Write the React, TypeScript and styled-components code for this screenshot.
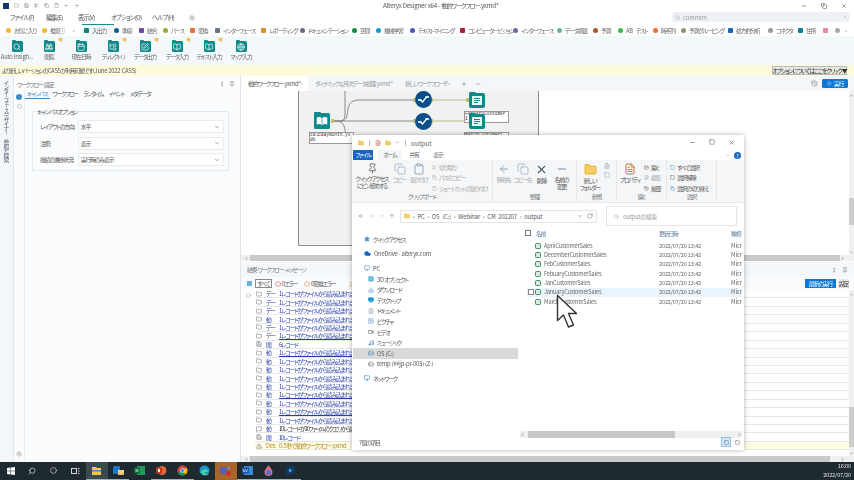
import type { ReactNode } from "react";
import styled, { createGlobalStyle } from "styled-components";
import {
  ArrowLeft,
  ArrowRight,
  ArrowUp,
  Binoculars,
  BookOpen,
  Calendar,
  ChevronDown,
  ChevronLeft,
  ChevronRight,
  ChevronUp,
  Circle,
  Clipboard,
  Cloud,
  Copy,
  Download,
  FileText,
  FolderTree,
  Folder,
  FolderOpen,
  Globe,
  HardDrive,
  History,
  Image,
  Minus,
  MoreVertical,
  Music,
  Pin,
  Play,
  Plus,
  RotateCw,
  Save,
  Scissors,
  Search,
  Settings,
  Square,
  SquarePen,
  Star,
  TriangleAlert,
  Video,
  Monitor,
  MessageSquare,
  X,
} from "lucide-react";

const GlobalStyle = createGlobalStyle`
  html, body {
    margin: 0;
    padding: 0;
    background: #fff;
  }
  body {
    font-family: "Noto Sans CJK JP", "Noto Sans", sans-serif;
    font-size: 5.8px;
    letter-spacing: -1.1px;
    font-feature-settings: "palt";
    color: #444;
  }
  * { box-sizing: border-box; }
`;

const Screen = styled.div`
  position: relative;
  width: 854px;
  height: 480px;
  overflow: hidden;
  display: flex;
  flex-direction: column;
  filter: blur(0.35px);
`;

// latin runs inside the squeezed japanese text
const Lat = styled.span`
  letter-spacing: -0.2px;
`;

const TitleBar = styled.div`
  height: 11px;
  display: flex;
  align-items: center;
  padding: 0 7px 0 3px;
  flex-shrink: 0;
  color: #666;
  position: relative;
`;
const AppLogo = styled.div`
  width: 6px;
  height: 6px;
  background: #14376e;
  margin-right: 5px;
`;
const QuickIcons = styled.div`
  display: flex;
  gap: 5px;
  color: #777;
`;
const AppTitle = styled.div`
  margin-left: 304px;
  font-size: 6.2px;
  color: #555;
`;
const WinControls = styled.div`
  margin-left: auto;
  display: flex;
  gap: 14px;
  color: #444;
`;

const MenuBar = styled.div`
  height: 13px;
  display: flex;
  align-items: center;
  padding-left: 10px;
  flex-shrink: 0;
  position: relative;
`;
const MenuItem = styled.span<{ $w: number }>`
  width: ${(p) => p.$w}px;
  color: #555;
  font-size: 6.3px;
  letter-spacing: -0.8px;
`;
const SearchBox = styled.div`
  position: absolute;
  left: 672px;
  top: 1px;
  width: 178px;
  height: 10px;
  background: #eef2f6;
  border-radius: 2px;
  display: flex;
  align-items: center;
  padding: 0 3px;
  gap: 3px;
  color: #999;
  letter-spacing: 0;
`;
const SearchClear = styled(X)`
  margin-left: auto;
`;

const CategoryBar = styled.div`
  height: 12px;
  display: flex;
  align-items: center;
  padding-left: 6px;
  flex-shrink: 0;
  white-space: nowrap;
  overflow: hidden;
`;
const Category = styled.div<{ $active?: boolean; $w: number }>`
  width: ${(p) => p.$w}px;
  height: 12px;
  flex-shrink: 0;
  display: flex;
  align-items: center;
  gap: 3px;
  color: #666;
  padding-left: ${(p) => (p.$active ? "2px" : "0")};
  background: ${(p) => (p.$active ? "#f3f8fb" : "transparent")};
  border-top: 1px solid ${(p) => (p.$active ? "#1a8d8d" : "transparent")};
`;
const Dot = styled.i<{ $color: string; $square?: boolean }>`
  display: block;
  width: 5px;
  height: 5px;
  flex-shrink: 0;
  border-radius: ${(p) => (p.$square ? "1px" : "50%")};
  background: ${(p) => p.$color};
`;

const Ribbon = styled.div`
  height: 29px;
  background: #f3f8fb;
  display: flex;
  align-items: flex-start;
  flex-shrink: 0;
  padding-left: 1px;
`;
const Tool = styled.div`
  position: relative;
  width: 32px;
  display: flex;
  flex-direction: column;
  align-items: center;
  padding-top: 5px;
  color: #666;
  line-height: 9px;
  white-space: nowrap;
`;
const ToolIcon = styled.div<{ $size?: number }>`
  position: relative;
  width: ${(p) => p.$size ?? 11}px;
  height: ${(p) => p.$size ?? 11}px;
  border-radius: 1.5px;
  background: #0f8a8a;
  color: #fff;
  display: flex;
  align-items: center;
  justify-content: center;
  &::before {
    content: "";
    position: absolute;
    top: -1px;
    left: 0;
    width: 45%;
    height: 2px;
    border-radius: 1px 1px 0 0;
    background: #0f8a8a;
  }
`;
const ToolStar = styled(Star)`
  position: absolute;
  top: 1px;
  right: 2px;
  color: #f3bd45;
  fill: #f3bd45;
`;

const Notice = styled.div`
  height: 11px;
  background: #fdfbdc;
  display: flex;
  align-items: center;
  justify-content: space-between;
  padding: 0 7px 0 2px;
  flex-shrink: 0;
  color: #555;
  white-space: nowrap;
`;
const NoticeText = styled.span`
  display: block;
`;
const NoticeButton = styled.div`
  height: 9px;
  width: 75px;
  background: #e6e6e2;
  border: 0.5px solid #bbb;
  color: #333;
  display: flex;
  align-items: center;
  justify-content: center;
`;

const Main = styled.div`
  flex: 1;
  min-height: 0;
  display: flex;
`;
const LeftRail = styled.div`
  width: 14px;
  background: #f3f7fa;
  border-right: 1px solid #e2e8ec;
  display: flex;
  flex-direction: column;
  align-items: center;
  gap: 5px;
  padding-top: 4px;
`;
const RailLabel = styled.div`
  writing-mode: vertical-rl;
  color: #667;
  white-space: nowrap;
  font-feature-settings: "vpal";
  letter-spacing: -1.2px;
`;
const SettingsPanel = styled.div`
  width: 227px;
  background: #fafcfd;
  border-right: 1px solid #dfe4e8;
  display: flex;
  flex-direction: column;
  position: relative;
`;
const PanelHeader = styled.div`
  height: 14px;
  padding: 2px 5px 0 3px;
  display: flex;
  align-items: center;
  gap: 4px;
  color: #777;
  flex-shrink: 0;
`;
const HeaderTitle = styled.span`
  margin-right: auto;
`;
const SettingsBody = styled.div`
  flex: 1;
  display: flex;
`;
const SideIcons = styled.div`
  width: 11px;
  border-right: 1px solid #e8edf0;
  display: flex;
  flex-direction: column;
  align-items: center;
  gap: 4px;
  padding-top: 4px;
  color: #888;
  position: relative;
`;
const SideDot = styled.div`
  width: 6px;
  height: 6px;
  border-radius: 50%;
  background: #3d8fc9;
`;
const SideFoot = styled.div`
  position: absolute;
  bottom: 3px;
  color: #999;
`;
const SettingsContent = styled.div`
  flex: 1;
  display: flex;
  flex-direction: column;
`;
const SubTabs = styled.div`
  height: 9px;
  display: flex;
  gap: 1px;
  margin-bottom: 12px;
  flex-shrink: 0;
`;
const SubTab = styled.span<{ $active?: boolean }>`
  color: ${(p) => (p.$active ? "#3a85c0" : "#555")};
  border-bottom: 1px solid ${(p) => (p.$active ? "#3a85c0" : "transparent")};
  padding: 0 2px;
  height: 9px;
  line-height: 8px;
`;
const GroupBox = styled.div`
  position: relative;
  margin-left: 7px;
  width: 197px;
  height: 60px;
  border: 1px solid #e4e9ec;
  padding: 8px 4px 0 7px;
  display: flex;
  flex-direction: column;
  gap: 3.5px;
`;
const GroupLegend = styled.span`
  position: absolute;
  top: -3px;
  left: 3px;
  background: #fafcfd;
  padding: 0 1px;
  color: #555;
  line-height: 6px;
`;
const FieldRow = styled.div`
  display: flex;
  align-items: center;
`;
const FieldLabel = styled.span`
  width: 38px;
  color: #555;
  white-space: nowrap;
`;
const SelectBox = styled.div`
  width: 147px;
  height: 13px;
  background: #fff;
  border: 1px solid #e8ebee;
  border-radius: 1px;
  display: flex;
  align-items: center;
  justify-content: space-between;
  padding: 0 3px 0 2px;
  color: #555;
`;

const Workspace = styled.div`
  flex: 1;
  min-width: 0;
  display: flex;
  flex-direction: column;
`;
const DocTabs = styled.div`
  height: 15px;
  background: #f3f7fa;
  display: flex;
  align-items: stretch;
  flex-shrink: 0;
  position: relative;
  color: #888;
`;
const DocTab = styled.div<{ $active?: boolean; $w: number }>`
  width: ${(p) => p.$w}px;
  padding: 0 5px 0 7px;
  display: flex;
  align-items: center;
  justify-content: space-between;
  background: ${(p) => (p.$active ? "#fff" : "transparent")};
  color: ${(p) => (p.$active ? "#555" : "#999")};
  white-space: nowrap;
`;
const TabTools = styled.div`
  display: flex;
  align-items: center;
  gap: 8px;
  margin-left: 5px;
  color: #777;
`;
const RunArea = styled.div`
  margin-left: auto;
  display: flex;
  align-items: center;
  gap: 4px;
  padding-right: 6px;
  color: #777;
`;
const RunButton = styled.div`
  width: 26px;
  height: 9px;
  border-radius: 1.5px;
  background: #0a78d7;
  color: #fff;
  display: flex;
  align-items: center;
  justify-content: center;
  gap: 2px;
`;
const CanvasRow = styled.div`
  height: 164px;
  display: flex;
  flex-shrink: 0;
`;
const Canvas = styled.div`
  position: relative;
  flex: 1;
  background: #fff;
  overflow: hidden;
`;
const CanvasFrame = styled.div`
  position: absolute;
  left: 57px;
  top: -2px;
  width: 241px;
  height: 157px;
  background: #f1f1f1;
  border: 1px solid #8b8b8b;
`;
const Wires = styled.svg`
  position: absolute;
  inset: 0;
`;
const Node = styled.div<{ $x: number; $y: number }>`
  position: absolute;
  left: ${(p) => p.$x}px;
  top: ${(p) => p.$y}px;
`;
const Annotation = styled.div<{ $x: number; $y: number }>`
  position: absolute;
  left: ${(p) => p.$x}px;
  top: ${(p) => p.$y}px;
  width: 45px;
  height: 12px;
  background: #fff;
  border: 1px solid #999;
  font-family: "Liberation Mono", monospace;
  font-size: 4.5px;
  letter-spacing: 0;
  line-height: 4.6px;
  color: #333;
  overflow: hidden;
  word-break: break-all;
`;
const VScroll = styled.div`
  width: 5px;
  background: #f0f0f0;
  position: relative;
  color: #555;
  flex-shrink: 0;
`;
const VThumb = styled.div<{ $top: number; $h: number }>`
  position: absolute;
  left: 0;
  right: 0;
  top: ${(p) => p.$top}px;
  height: ${(p) => p.$h}px;
  background: #cdcdcd;
`;
const VArrowEnd = styled(ChevronDown)`
  position: absolute;
  bottom: 0;
  left: 0;
`;
const HScroll = styled.div`
  height: 6px;
  display: flex;
  align-items: center;
  background: #f0f0f0;
  color: #444;
  flex-shrink: 0;
  padding: 0 9px 0 3px;
  justify-content: space-between;
  position: relative;
`;
const HThumb = styled.div<{ $l: number; $r: number }>`
  position: absolute;
  top: 0;
  bottom: 0;
  left: ${(p) => p.$l}px;
  right: ${(p) => p.$r}px;
  background: #c9c9c9;
`;
const ScrollLeft = styled(ChevronLeft)`
  position: relative;
`;
const ScrollRight = styled(ChevronRight)`
  position: relative;
`;

const Results = styled.div`
  flex: 1;
  min-height: 0;
  display: flex;
  flex-direction: column;
  margin-top: 1px;
  background: #fff;
`;
const ResultsHead = styled.div`
  height: 15px;
  background: #f5f8fa;
  display: flex;
  align-items: center;
  gap: 5px;
  padding: 0 6px;
  color: #777;
  flex-shrink: 0;
`;
const ResultsBar = styled.div`
  height: 13px;
  background: #f9fbfc;
  display: flex;
  align-items: center;
  padding: 0 5px 0 6px;
  flex-shrink: 0;
  gap: 3px;
  color: #555;
`;
const BarDot = styled.div`
  width: 5px;
  height: 5px;
  background: #6cb0dc;
`;
const AllButton = styled.div`
  width: 17px;
  height: 9px;
  border: 1px solid #888;
  background: #fff;
  text-align: center;
  line-height: 7px;
`;
const BarItem = styled.span<{ $w: number }>`
  width: ${(p) => p.$w}px;
  display: flex;
  align-items: center;
  gap: 1px;
  white-space: nowrap;
`;
const LatestButton = styled.div`
  margin-left: auto;
  width: 31px;
  height: 9px;
  background: #0a78d7;
  color: #fff;
  text-align: center;
  line-height: 9px;
`;
const SetupButton = styled.div`
  width: 11px;
  height: 9px;
  background: #e9e9e9;
  text-align: center;
  line-height: 9px;
  color: #333;
  margin-left: -1px;
`;
const TableWrap = styled.div`
  flex: 1;
  min-height: 0;
  display: flex;
`;
const Table = styled.div`
  flex: 1;
  padding-left: 5px;
  display: flex;
`;
const TableSide = styled.div`
  width: 9px;
  color: #888;
  padding-top: 1px;
`;
const TableRows = styled.div`
  flex: 1;
`;
const LogRow = styled.div<{ $warn?: boolean }>`
  height: 8.45px;
  display: flex;
  align-items: center;
  border-bottom: 1px solid #e7e7e7;
  background: ${(p) => (p.$warn ? "#fffce6" : "#fff")};
  color: ${(p) => (p.$warn ? "#b08a1e" : "#333")};
  white-space: nowrap;
  overflow: hidden;
`;
const LogIcon = styled.div`
  width: 8px;
  color: #666;
  display: flex;
  justify-content: center;
  flex-shrink: 0;
`;
const LogTool = styled.span<{ $plain?: boolean }>`
  width: 16px;
  padding-left: 3px;
  color: ${(p) => (p.$plain ? "inherit" : "#2a3fa8")};
  flex-shrink: 0;
`;
const LogText = styled.span<{ $link?: boolean }>`
  color: ${(p) => (p.$link ? "#2a3fa8" : "inherit")};
  text-decoration: ${(p) => (p.$link ? "underline" : "none")};
`;

const Taskbar = styled.div`
  height: 18px;
  background: #1e2a30;
  display: flex;
  align-items: center;
  flex-shrink: 0;
  color: #e8e8e8;
  position: relative;
`;
const TaskSlot = styled.div<{ $bg?: string; $open?: boolean }>`
  width: 21.5px;
  height: 18px;
  display: flex;
  align-items: center;
  justify-content: center;
  background: ${(p) => p.$bg ?? "transparent"};
  border-bottom: 1px solid ${(p) => (p.$open ? "#9fb0b8" : "transparent")};
`;
const MirroredSearch = styled(Search)`
  transform: scaleX(-1);
`;
const Clock = styled.div`
  margin-left: auto;
  padding-right: 3px;
  text-align: right;
  font-size: 5.5px;
  letter-spacing: -0.1px;
  line-height: 9px;
  color: #dfe5e8;
`;

/* explorer window floats over the designer */
const ExplorerWindow = styled.div`
  position: absolute;
  left: 352px;
  top: 135px;
  width: 392px;
  height: 315px;
  background: #fff;
  box-shadow: 0 0 5px rgba(0, 0, 0, 0.3);
  display: flex;
  flex-direction: column;
`;
const ExTitle = styled.div`
  height: 15px;
  display: flex;
  align-items: center;
  padding: 0 9px 0 6px;
  gap: 4px;
  color: #666;
  flex-shrink: 0;
  font-size: 6.5px;
  letter-spacing: 0;
`;
const TitleDivider = styled.i`
  width: 1px;
  height: 6px;
  background: #bbb;
  margin: 0 1px;
`;
const ExControls = styled.div`
  margin-left: auto;
  display: flex;
  gap: 13px;
  color: #555;
`;
const ExTabs = styled.div`
  height: 10px;
  display: flex;
  align-items: stretch;
  flex-shrink: 0;
  color: #666;
  padding-left: 1px;
  position: relative;
`;
const ExFileTab = styled.div`
  width: 20px;
  margin-right: 5px;
  background: #1566c0;
  color: #fff;
  text-align: center;
  line-height: 10px;
`;
const ExTab = styled.div<{ $active?: boolean }>`
  width: 24px;
  text-align: center;
  line-height: 10px;
  background: ${(p) => (p.$active ? "#f5f6f7" : "transparent")};
`;
const ExHelp = styled.div`
  margin-left: auto;
  display: flex;
  align-items: center;
  gap: 4px;
  padding-right: 3px;
  color: #888;
`;
const HelpDot = styled.div`
  width: 7px;
  height: 7px;
  border-radius: 50%;
  background: #1568c4;
  color: #fff;
  text-align: center;
  line-height: 7px;
  font-size: 5px;
  letter-spacing: 0;
`;
const ExRibbon = styled.div`
  height: 43px;
  background: #f5f6f7;
  display: flex;
  border-bottom: 1px solid #e8eaec;
  flex-shrink: 0;
`;
const RibbonGroup = styled.div<{ $w: number }>`
  width: ${(p) => p.$w}px;
  border-right: 1px solid #e6e8ea;
  display: flex;
  flex-direction: column;
  flex-shrink: 0;
`;
const GroupItems = styled.div`
  flex: 1;
  min-height: 0;
  display: flex;
  gap: 4px;
  padding: 3px 3px 0;
  color: #8fa0b0;
`;
const GroupName = styled.div`
  height: 9px;
  text-align: center;
  color: #777;
  line-height: 8px;
  white-space: nowrap;
`;
const BigAction = styled.div<{ $w?: number; $muted?: boolean }>`
  width: ${(p) => p.$w ?? 20}px;
  display: flex;
  flex-direction: column;
  align-items: center;
  gap: 1px;
  text-align: center;
  line-height: 7px;
  white-space: nowrap;
  color: ${(p) => (p.$muted ? "#aaa" : "#555")};
`;
const SmallActions = styled.div`
  display: flex;
  flex-direction: column;
  gap: 2.5px;
`;
const SmallAction = styled.div<{ $muted?: boolean }>`
  display: flex;
  align-items: center;
  gap: 2px;
  height: 8px;
  color: ${(p) => (p.$muted ? "#aaa" : "#555")};
  white-space: nowrap;
`;
const ExAddress = styled.div`
  height: 26px;
  display: flex;
  align-items: center;
  padding: 0 7px 0 6px;
  gap: 5px;
  color: #777;
  flex-shrink: 0;
`;
const AddressBox = styled.div`
  width: 197px;
  height: 13px;
  border: 1px solid #e4e4e4;
  display: flex;
  align-items: center;
  gap: 3px;
  padding: 0 3px;
  color: #555;
  letter-spacing: -0.1px;
  word-spacing: 1.6px;
  white-space: nowrap;
`;
const AddressEnd = styled.div`
  margin-left: auto;
  display: flex;
  gap: 4px;
  color: #666;
`;
const ExSearch = styled.div`
  margin-left: 4px;
  flex: 1;
  height: 20px;
  border: 1px solid #e6e6e6;
  display: flex;
  align-items: center;
  gap: 4px;
  padding-left: 7px;
  color: #999;
  letter-spacing: -0.2px;
`;
const ExBody = styled.div`
  flex: 1;
  min-height: 0;
  display: flex;
  position: relative;
`;
const NavTree = styled.div`
  width: 166px;
  padding: 5px 0 0 1px;
  display: flex;
  flex-direction: column;
  flex-shrink: 0;
`;
const NavItem = styled.div<{ $indent?: boolean; $selected?: boolean; $gap?: number }>`
  height: 10.6px;
  margin-top: ${(p) => p.$gap ?? 0}px;
  padding-left: ${(p) => (p.$indent ? "15px" : "11px")};
  display: flex;
  align-items: center;
  gap: 3px;
  color: #555;
  background: ${(p) => (p.$selected ? "#d9d9d9" : "transparent")};
  white-space: nowrap;
`;
const NavIcon = styled.div<{ $color: string }>`
  color: ${(p) => p.$color};
  display: flex;
`;
const FilePane = styled.div`
  flex: 1;
  min-width: 0;
  position: relative;
  display: flex;
  flex-direction: column;
`;
const FileHead = styled.div`
  height: 12px;
  padding: 0 0 4px 7px;
  display: flex;
  align-items: center;
  color: #5d7da0;
  flex-shrink: 0;
`;
const HeadCheck = styled.div`
  width: 6px;
  height: 6px;
  border: 1px solid #777;
  margin-right: 5px;
`;
const FileCol = styled.div<{ $w: number }>`
  width: ${(p) => p.$w}px;
  white-space: nowrap;
  flex-shrink: 0;
`;
const FileRows = styled.div`
  flex: 1;
`;
const FileRow = styled.div<{ $hover?: boolean }>`
  height: 9.33px;
  margin: 0 2px 0 9px;
  display: flex;
  align-items: center;
  padding-left: 1px;
  background: ${(p) => (p.$hover ? "#e9f4fc" : "transparent")};
  color: #666;
  letter-spacing: -0.15px;
  font-size: 5.6px;
  white-space: nowrap;
`;
const RowCheck = styled.div<{ $on?: boolean }>`
  width: 6px;
  height: 6px;
  border: ${(p) => (p.$on ? "1px solid #888" : "none")};
  background: ${(p) => (p.$on ? "#fff" : "transparent")};
  margin-right: 1px;
  flex-shrink: 0;
`;
const ExcelBadge = styled.div`
  width: 6px;
  height: 6px;
  border-radius: 1.5px;
  border: 1.5px solid #3c8a63;
  background: #d9ebe1;
  margin-right: 3px;
  flex-shrink: 0;
`;
const ExScroll = styled.div`
  height: 7px;
  margin: 0 2px 3px;
  background: #f0f0f0;
  display: flex;
  align-items: center;
  justify-content: space-between;
  color: #444;
  position: relative;
  flex-shrink: 0;
`;
const ExThumb = styled.div`
  position: absolute;
  left: 8px;
  top: 0;
  bottom: 0;
  width: 147px;
  background: #c6c6c6;
`;
const StatusGap = styled.div`
  height: 9px;
  flex-shrink: 0;
`;
const ExStatus = styled.div`
  height: 12px;
  display: flex;
  align-items: center;
  padding: 0 2px 0 7px;
  color: #666;
  position: absolute;
  left: 0;
  right: 0;
  bottom: 2px;
`;
const ViewButtons = styled.div`
  margin-left: auto;
  display: flex;
  gap: 1px;
`;
const ViewButton = styled.div<{ $on?: boolean }>`
  width: 10px;
  height: 10px;
  border: 1px solid ${(p) => (p.$on ? "#8cc4e8" : "transparent")};
  background: ${(p) => (p.$on ? "#d4e9f7" : "transparent")};
  display: flex;
  align-items: center;
  justify-content: center;
  color: #556;
`;
const Cursor = styled.svg`
  position: absolute;
  left: 556px;
  top: 294px;
`;

const categories: { label: ReactNode; key: string; color?: string; square?: boolean; w: number }[] = [
  { key: "fav", label: "お気に入り", color: "#f2b830", w: 36 },
  { key: "rec", label: "推奨 ⓘ", color: "#f2b830", w: 31 },
  { key: "prev", label: "‹", w: 9 },
  { key: "io", label: "入出力", color: "#13807f", square: true, w: 32 },
  { key: "prep", label: "準備", color: "#0f5a94", w: 25 },
  { key: "join", label: "結合", color: "#6a4c9c", square: true, w: 24 },
  { key: "parse", label: "パース", color: "#9aa63a", w: 27 },
  { key: "transform", label: "変換", color: "#e2713a", square: true, w: 25 },
  { key: "iface", label: "インターフェース", color: "#6b7480", square: true, w: 46 },
  { key: "report", label: "レポーティング", color: "#d9912f", square: true, w: 39 },
  { key: "doc", label: "ドキュメンテーション", color: "#6f6786", w: 52 },
  { key: "spatial", label: "空間", color: "#138a3e", w: 24 },
  { key: "ml", label: "機械学習", color: "#129ac9", w: 34 },
  { key: "text", label: "テキストマイニング", color: "#4c54b8", w: 50 },
  { key: "cv", label: "コンピュータービジョン", color: "#a3233c", square: true, w: 53 },
  { key: "iface2", label: "インターフェース", color: "#6a6aa0", w: 44 },
  { key: "inv", label: "データ調査", color: "#62b59a", w: 36 },
  { key: "pred", label: "予測", color: "#a8582f", w: 25 },
  { key: "ab", label: <><Lat>AB</Lat> テスト</>, color: "#3fb54f", w: 35 },
  { key: "ts", label: "時系列", color: "#e8703a", w: 28 },
  { key: "group", label: "予測グルーピング", color: "#8b9374", w: 47 },
  { key: "presc", label: "処方的分析", color: "#1c63b0", square: true, w: 40 },
  { key: "conn", label: "コネクタ", color: "#9a9a9a", w: 30 },
  { key: "addr", label: "住所", color: "#0f7f96", square: true, w: 25 },
  { key: "more1", label: "", color: "#e58aa0", square: true, w: 12 },
  { key: "more2", label: "", color: "#a8a8a8", w: 10 },
  { key: "next", label: "›", w: 6 },
];

const tools: { label: ReactNode; key: string; star: boolean; icon: ReactNode }[] = [
  { key: "auto", label: <Lat>Auto Insigh...</Lat>, star: false, icon: <Search size={8} /> },
  { key: "browse", label: "閲覧", star: true, icon: <Binoculars size={8} /> },
  { key: "date", label: "現在日時", star: false, icon: <Calendar size={8} /> },
  { key: "dir", label: "ディレクトリ", star: true, icon: <FolderTree size={8} /> },
  { key: "out", label: "データ出力", star: true, icon: <SquarePen size={8} /> },
  { key: "in", label: "データ入力", star: true, icon: <BookOpen size={8} /> },
  { key: "txt", label: "テキスト入力", star: true, icon: <BookOpen size={8} /> },
  { key: "map", label: "マップ入力", star: false, icon: <Globe size={8} /> },
];

const LOG = "1 レコードがファイルから読み込まれました";
const logs: { tool: string; text: string; icon: "folder" | "save" | "chat"; link?: boolean }[] = [
  { tool: "デー", text: LOG, icon: "folder", link: true },
  { tool: "デー", text: LOG, icon: "folder", link: true },
  { tool: "デー", text: LOG, icon: "folder", link: true },
  { tool: "動", text: LOG, icon: "folder", link: true },
  { tool: "デー", text: LOG, icon: "folder", link: true },
  { tool: "デー", text: LOG, icon: "folder", link: true },
  { tool: "閲", text: "6 レコード", icon: "save", link: true },
  { tool: "動", text: LOG, icon: "folder", link: true },
  { tool: "動", text: LOG, icon: "folder", link: true },
  { tool: "動", text: LOG, icon: "folder", link: true },
  { tool: "動", text: LOG, icon: "folder", link: true },
  { tool: "動", text: LOG, icon: "folder", link: true },
  { tool: "動", text: LOG, icon: "folder", link: true },
  { tool: "動", text: LOG, icon: "folder", link: true },
  { tool: "動", text: LOG, icon: "folder", link: true },
  { tool: "動", text: LOG, icon: "folder", link: true },
  { tool: "動", text: "10 レコードが10ファイルのクエリから読み込まれました", icon: "chat" },
  { tool: "閲", text: "10 レコード", icon: "save", link: true },
];

const files = [
  "AprilCustomerSales",
  "DecemberCustomerSales",
  "FebCustomerSales",
  "FebuaryCustomerSales",
  "JanCustomerSales",
  "JanuaryCustomerSales",
  "MarchCustomerSales",
];

const BookIcon = ({ size }: { size: number }) => (
  <svg width={size} height={size} viewBox="0 0 16 16">
    <path d="M2 4c2-1 4-1 6 1v8c-2-2-4-2-6-1z" fill="#fff" />
    <path d="M14 4c-2-1-4-1-6 1v8c2-2 4-2 6-1z" fill="#fff" />
    <path d="M8 5v8" stroke="#0f8a8a" strokeWidth="0.8" />
  </svg>
);

const OutputIcon = () => (
  <svg width="16" height="16" viewBox="0 0 16 16">
    <rect x="0" y="1" width="16" height="15" rx="2" fill="#0f8a8a" />
    <path d="M0 3V1.5C0 .7.7 0 1.5 0H6l1.5 1.5z" fill="#0f8a8a" />
    <rect x="3" y="4" width="10" height="9" fill="#e9f5f4" />
    <path d="M5 6.5h6M5 8.5h6M5 10.5h4" stroke="#0f8a8a" strokeWidth="1" />
  </svg>
);

const CheckNode = () => (
  <svg width="17" height="17" viewBox="0 0 17 17">
    <circle cx="8.5" cy="8.5" r="8.5" fill="#0b4f8a" />
    <path d="M3 9h2.5l2 2 4-5H14" fill="none" stroke="#fff" strokeWidth="1.3" />
    <circle cx="5.5" cy="9" r="1" fill="#fff" />
    <circle cx="11.5" cy="6" r="1" fill="#fff" />
  </svg>
);

const AppGlyph = ({ children }: { children: ReactNode }) => (
  <svg width="11" height="11" viewBox="0 0 11 11">
    {children}
  </svg>
);

export default function App() {
  return (
    <>
      <GlobalStyle />
      <Screen>
        <TitleBar>
          <AppLogo />
          <QuickIcons>
            <Folder size={5} />
            <Save size={5} />
            <Scissors size={5} />
            <Copy size={5} />
            <Clipboard size={5} />
            <ArrowLeft size={5} />
            <ArrowRight size={5} />
          </QuickIcons>
          <AppTitle>
            <Lat>Alteryx Designer x64 - </Lat>動的ワークフロー<Lat>.yxmd*</Lat>
          </AppTitle>
          <WinControls>
            <Minus size={6} />
            <Copy size={6} />
            <X size={6} />
          </WinControls>
        </TitleBar>

        <MenuBar>
          <MenuItem $w={36}>ファイル(F)</MenuItem>
          <MenuItem $w={32}>編集(E)</MenuItem>
          <MenuItem $w={33}>表示(V)</MenuItem>
          <MenuItem $w={41}>オプション(O)</MenuItem>
          <MenuItem $w={37}>ヘルプ(H)</MenuItem>
          <Settings size={6} color="#888" />
          <SearchBox>
            <Search size={5} />
            commen
            <SearchClear size={4} />
          </SearchBox>
        </MenuBar>

        <CategoryBar>
          {categories.map((c) => (
            <Category key={c.key} $w={c.w} $active={c.key === "io"}>
              {c.color && <Dot $color={c.color} $square={c.square} />}
              {c.label}
            </Category>
          ))}
        </CategoryBar>

        <Ribbon>
          {tools.map((t) => (
            <Tool key={t.key}>
              <ToolIcon>{t.icon}</ToolIcon>
              {t.label}
              {t.star && <ToolStar size={5} />}
            </Tool>
          ))}
        </Ribbon>

        <Notice>
          <NoticeText>
            より新しいバージョンの<Lat>CASS</Lat>が利用可能です <Lat>(June 2022 CASS)</Lat>
          </NoticeText>
          <NoticeButton>オプションについてはここをクリック ▼</NoticeButton>
        </Notice>

        <Main>
          <LeftRail>
            <RailLabel>インターフェースデザイナー</RailLabel>
            <RailLabel>参照と検索</RailLabel>
          </LeftRail>

          <SettingsPanel>
            <PanelHeader>
              <HeaderTitle>ワークフロー - 設定</HeaderTitle>
              <MoreVertical size={6} />
              <Pin size={6} />
            </PanelHeader>
            <SettingsBody>
              <SideIcons>
                <SideDot />
                <Circle size={5} />
                <SideFoot>
                  <Settings size={6} />
                </SideFoot>
              </SideIcons>
              <SettingsContent>
                <SubTabs>
                  <SubTab $active>キャンバス</SubTab>
                  <SubTab>ワークフロー</SubTab>
                  <SubTab>ランタイム</SubTab>
                  <SubTab>イベント</SubTab>
                  <SubTab>メタデータ</SubTab>
                </SubTabs>
                <GroupBox>
                  <GroupLegend>キャンバスオプション</GroupLegend>
                  <FieldRow>
                    <FieldLabel>レイアウトの方向:</FieldLabel>
                    <SelectBox>
                      水平
                      <ChevronDown size={6} />
                    </SelectBox>
                  </FieldRow>
                  <FieldRow>
                    <FieldLabel>注釈:</FieldLabel>
                    <SelectBox>
                      表示
                      <ChevronDown size={6} />
                    </SelectBox>
                  </FieldRow>
                  <FieldRow>
                    <FieldLabel>接続の進捗状況:</FieldLabel>
                    <SelectBox>
                      実行時のみ表示
                      <ChevronDown size={6} />
                    </SelectBox>
                  </FieldRow>
                </GroupBox>
              </SettingsContent>
            </SettingsBody>
          </SettingsPanel>

          <Workspace>
            <DocTabs>
              <DocTab $active $w={67}>
                <span>
                  動的ワークフロー<Lat>.yxmd*</Lat>
                </span>
                <X size={4} />
              </DocTab>
              <DocTab $w={90}>
                <span>
                  ダイナミックな月次データ処理<Lat>.yxmd*</Lat>
                </span>
                <X size={4} />
              </DocTab>
              <DocTab $w={58}>
                新しいワークフロー9*
                <X size={4} />
              </DocTab>
              <TabTools>
                <Plus size={6} />
                <Minus size={6} />
              </TabTools>
              <RunArea>
                <History size={7} />
                <RunButton>
                  <Play size={5} />
                  実行
                </RunButton>
              </RunArea>
            </DocTabs>

            <CanvasRow>
              <Canvas>
                <CanvasFrame />
                <Wires width="608" height="164">
                  <path
                    d="M93 30H100C112 30 100 9 118 9H172M93 30H172M93 30C105 30 103 36 106 50M104 0V24C104 30 100 30 96 30"
                    fill="none"
                    stroke="#8a8a8a"
                    strokeWidth="1"
                  />
                  <path d="M192 9H228M192 30H228" stroke="#b9b98a" strokeWidth="1" />
                  <path d="M90 28h3v4h-3zM172 7h3v4h-3zM172 28h3v4h-3zM189 7h3v4h-3zM189 28h3v4h-3zM225 7h3v4h-3zM225 28h3v4h-3z" fill="#c3c36a" />
                </Wires>
                <Node $x={73} $y={22}>
                  <ToolIcon $size={16}>
                    <BookIcon size={14} />
                  </ToolIcon>
                </Node>
                <Annotation $x={223} $y={-12} />
                <Node $x={174} $y={0}>
                  <CheckNode />
                </Node>
                <Node $x={174} $y={22}>
                  <CheckNode />
                </Node>
                <Node $x={228} $y={1}>
                  <OutputIcon />
                </Node>
                <Annotation $x={223} $y={20}>
                  FebuaryCustomer1
                </Annotation>
                <Node $x={228} $y={22}>
                  <OutputIcon />
                </Node>
                <Annotation $x={68} $y={41}>
                  calcdaymonth.yxdb
                </Annotation>
                <Annotation $x={223} $y={41}>
                  MarchCustomer1
                </Annotation>
              </Canvas>
              <VScroll>
                <ChevronUp size={5} />
                <VThumb $top={107} $h={27} />
                <VArrowEnd size={5} />
              </VScroll>
            </CanvasRow>
            <HScroll>
              <HThumb $l={9} $r={14} />
              <ScrollLeft size={5} />
              <ScrollRight size={5} />
            </HScroll>

            <Results>
              <ResultsHead>
                <HeaderTitle>結果 - ワークフロー - メッセージ</HeaderTitle>
                <MoreVertical size={6} />
                <Pin size={6} />
              </ResultsHead>
              <ResultsBar>
                <BarDot />
                <AllButton>すべて</AllButton>
                <BarItem $w={26}>
                  <Circle size={6} color="#d04a3a" />0 エラー
                </BarItem>
                <BarItem $w={42}>
                  <Circle size={6} color="#d9803a" />0 変換エラー
                </BarItem>
                <TriangleAlert size={6} color="#c9a43a" />
                <LatestButton>最新の実行</LatestButton>
                <SetupButton>設定</SetupButton>
              </ResultsBar>
              <TableWrap>
                <Table>
                  <TableSide>
                    <Circle size={5} />
                  </TableSide>
                  <TableRows>
                    {logs.map((l, i) => (
                      <LogRow key={i}>
                        <LogIcon>
                          {l.icon === "folder" && <Folder size={6} />}
                          {l.icon === "save" && <Save size={6} />}
                          {l.icon === "chat" && <MessageSquare size={6} />}
                        </LogIcon>
                        <LogTool>{l.tool}</LogTool>
                        <LogText $link={l.link}>{l.text}</LogText>
                      </LogRow>
                    ))}
                    <LogRow $warn>
                      <LogIcon>
                        <TriangleAlert size={6} />
                      </LogIcon>
                      <LogTool $plain>
                        <Lat>Des</Lat>
                      </LogTool>
                      <LogText>
                        <Lat>0.5</Lat> 秒 で 動的ワークフロー<Lat>.yxmd</Lat>
                      </LogText>
                    </LogRow>
                  </TableRows>
                </Table>
                <VScroll>
                  <ChevronUp size={5} />
                  <VThumb $top={117} $h={40} />
                  <VArrowEnd size={5} />
                </VScroll>
              </TableWrap>
              <HScroll>
                <HThumb $l={9} $r={24} />
                <ScrollLeft size={5} />
                <ScrollRight size={5} />
              </HScroll>
            </Results>
          </Workspace>
        </Main>

        <Taskbar>
          <TaskSlot>
            <svg width="8" height="8" viewBox="0 0 8 8">
              <path d="M0 1l3.5-.5V3.700H0zM4 .4 8 0v3.700H4zM0 4.200h3.500v3.300L0 7zM4 4.200h4V8l-4-.6z" fill="#fff" />
            </svg>
          </TaskSlot>
          <TaskSlot>
            <MirroredSearch size={8} />
          </TaskSlot>
          <TaskSlot>
            <Circle size={7} />
          </TaskSlot>
          <TaskSlot>
            <svg width="9" height="8" viewBox="0 0 9 8" fill="none" stroke="#e8e8e8" strokeWidth="0.9">
              <rect x="0.5" y="1.5" width="5" height="5" />
              <path d="M7 1.5h1.500M7 4h1.500M7 6.500h1.500" />
            </svg>
          </TaskSlot>
          <TaskSlot $bg="#3a4a50" $open>
            <AppGlyph>
              <path d="M1 2h4l1 1h4v7H1z" fill="#f4c542" />
              <rect x="1" y="5" width="9" height="1.6" fill="#3c8fd0" />
            </AppGlyph>
          </TaskSlot>
          <TaskSlot $open>
            <AppGlyph>
              <rect x="0" y="1" width="7" height="8" rx="1" fill="#1b78c8" />
              <rect x="5" y="5" width="6" height="5" fill="#f0c060" />
              <path d="M5 5l3 2.500L11 5" fill="none" stroke="#fff" strokeWidth="0.7" />
            </AppGlyph>
          </TaskSlot>
          <TaskSlot>
            <AppGlyph>
              <rect x="3" y="1" width="8" height="9" fill="#1f9a5a" />
              <rect x="0" y="2.5" width="6" height="6" fill="#136b3d" />
              <path d="M1.500 4l3 3M4.500 4l-3 3" stroke="#fff" strokeWidth="0.7" />
            </AppGlyph>
          </TaskSlot>
          <TaskSlot $open>
            <AppGlyph>
              <circle cx="6" cy="5.5" r="4.5" fill="#e0683a" />
              <rect x="0" y="2.5" width="6" height="6" fill="#b83a20" />
              <rect x="2" y="4" width="2" height="3" fill="#fff" />
            </AppGlyph>
          </TaskSlot>
          <TaskSlot $open>
            <AppGlyph>
              <circle cx="5.5" cy="5.5" r="5" fill="#db4437" />
              <path d="M5.500 5.500 1 8a5 5 0 0 0 7.500 1.500z" fill="#0f9d58" />
              <path d="M5.500 5.500 8.500 9.500A5 5 0 0 0 10.500 5.500 5 5 0 0 0 9.500 2.500z" fill="#f4b400" />
              <circle cx="5.5" cy="5.5" r="2" fill="#4285f4" stroke="#fff" strokeWidth="0.6" />
            </AppGlyph>
          </TaskSlot>
          <TaskSlot>
            <AppGlyph>
              <circle cx="5.5" cy="5.5" r="5" fill="#1398c8" />
              <path d="M2 7c1-3 5-4 7-1 0 1-2 1-3 1-1 1 1 3 4 2-2 2-7 2-8-2z" fill="#52d09a" />
            </AppGlyph>
          </TaskSlot>
          <TaskSlot $bg="#a8662a">
            <AppGlyph>
              <rect x="0" y="2" width="7" height="7" rx="1" fill="#5d5fae" />
              <circle cx="8.5" cy="3" r="1.6" fill="#7b83c8" />
              <circle cx="8.5" cy="8.5" r="2.4" fill="#d9263a" />
            </AppGlyph>
          </TaskSlot>
          <TaskSlot $open>
            <AppGlyph>
              <rect x="2" y="1" width="9" height="9" fill="#3b8ad8" />
              <rect x="0" y="2.5" width="7" height="6" fill="#1c56a8" />
              <path d="M1 4l1 3 1.200-2.400L4.500 7l1-3" fill="none" stroke="#fff" strokeWidth="0.5" />
            </AppGlyph>
          </TaskSlot>
          <TaskSlot $open>
            <AppGlyph>
              <path d="M5.500 0C7 3 9.500 4.500 9.500 7a4 4 0 0 1-8 0C1.500 4.500 4 3 5.500 0z" fill="#e0708a" />
              <path d="M5.500 4c1 1.500 2.500 2.200 2.500 3.700a2.500 2.500 0 0 1-5 0C3 6.200 4.500 5.500 5.500 4z" fill="#5a70c8" />
            </AppGlyph>
          </TaskSlot>
          <TaskSlot $open>
            <AppGlyph>
              <rect x="1" y="1" width="9" height="9" fill="#12365c" />
              <path d="M4 3.500 7.500 5.500 4 7.500z" fill="#4aa8e0" />
            </AppGlyph>
          </TaskSlot>
          <Clock>
            16:00
            <br />
            2022/07/20
          </Clock>
        </Taskbar>

        <ExplorerWindow>
          <ExTitle>
            <Folder size={6} color="#e8b53a" fill="#f4cf62" />
            <TitleDivider />
            <FileText size={6} color="#c0503a" />
            <Folder size={6} color="#e8b53a" fill="#f4cf62" />
            <ChevronDown size={5} />
            <TitleDivider />
            output
            <ExControls>
              <Minus size={7} />
              <Square size={6} />
              <X size={7} />
            </ExControls>
          </ExTitle>
          <ExTabs>
            <ExFileTab>ファイル</ExFileTab>
            <ExTab $active>ホーム</ExTab>
            <ExTab>共有</ExTab>
            <ExTab>表示</ExTab>
            <ExHelp>
              <ChevronUp size={5} />
              <HelpDot>?</HelpDot>
            </ExHelp>
          </ExTabs>
          <ExRibbon>
            <RibbonGroup $w={141}>
              <GroupItems>
                <BigAction $w={34}>
                  <Pin size={11} color="#666" />
                  <span>
                    クイック アクセス
                    <br />
                    にピン留めする
                  </span>
                </BigAction>
                <BigAction $w={13} $muted>
                  <Copy size={12} color="#a8bbd0" />
                  コピー
                </BigAction>
                <BigAction $w={18} $muted>
                  <Clipboard size={12} color="#8fa6bf" />
                  貼り付け
                </BigAction>
                <SmallActions>
                  <SmallAction $muted>
                    <Scissors size={5} />
                    切り取り
                  </SmallAction>
                  <SmallAction $muted>
                    <Copy size={5} />
                    パスのコピー
                  </SmallAction>
                  <SmallAction $muted>
                    <Clipboard size={5} />
                    ショートカットの貼り付け
                  </SmallAction>
                </SmallActions>
              </GroupItems>
              <GroupName>クリップボード</GroupName>
            </RibbonGroup>
            <RibbonGroup $w={84}>
              <GroupItems>
                <BigAction $w={15} $muted>
                  <ArrowLeft size={12} color="#8fa6bf" />
                  移動先
                </BigAction>
                <BigAction $w={15} $muted>
                  <Copy size={12} color="#a8bbd0" />
                  コピー先
                </BigAction>
                <BigAction $w={15}>
                  <X size={13} color="#4a5a6a" />
                  削除
                </BigAction>
                <BigAction $w={17}>
                  <Minus size={12} color="#6a88a8" />
                  <span>
                    名前の
                    <br />
                    変更
                  </span>
                </BigAction>
              </GroupItems>
              <GroupName>整理</GroupName>
            </RibbonGroup>
            <RibbonGroup $w={40}>
              <GroupItems>
                <BigAction $w={20}>
                  <Folder size={13} color="#e8b53a" fill="#f4cf62" />
                  <span>
                    新しい
                    <br />
                    フォルダー
                  </span>
                </BigAction>
                <SmallActions>
                  <FileText size={6} />
                  <Square size={6} />
                </SmallActions>
              </GroupItems>
              <GroupName>新規</GroupName>
            </RibbonGroup>
            <RibbonGroup $w={50}>
              <GroupItems>
                <BigAction $w={20}>
                  <FileText size={12} color="#d2703a" />
                  プロパティ
                </BigAction>
                <SmallActions>
                  <SmallAction>
                    <FolderOpen size={5} />
                    開く
                  </SmallAction>
                  <SmallAction $muted>
                    <FileText size={5} />
                    編集
                  </SmallAction>
                  <SmallAction>
                    <History size={5} />
                    履歴
                  </SmallAction>
                </SmallActions>
              </GroupItems>
              <GroupName>開く</GroupName>
            </RibbonGroup>
            <RibbonGroup $w={50}>
              <GroupItems>
                <SmallActions>
                  <SmallAction>
                    <Square size={5} color="#4a90d0" />
                    すべて選択
                  </SmallAction>
                  <SmallAction>
                    <Square size={5} />
                    選択解除
                  </SmallAction>
                  <SmallAction>
                    <Copy size={5} color="#4a90d0" />
                    選択の切り替え
                  </SmallAction>
                </SmallActions>
              </GroupItems>
              <GroupName>選択</GroupName>
            </RibbonGroup>
          </ExRibbon>
          <ExAddress>
            <ArrowLeft size={6} />
            <ArrowRight size={6} color="#bbb" />
            <ChevronDown size={4} />
            <ArrowUp size={6} />
            <AddressBox>
              <Folder size={6} color="#e8b53a" fill="#f4cf62" />
              › PC › OS (C:) › Webinar › CM 202207 › output
              <AddressEnd>
                <ChevronDown size={6} />
                <RotateCw size={6} />
              </AddressEnd>
            </AddressBox>
            <ExSearch>
              <Search size={5} />
              outputの検索
            </ExSearch>
          </ExAddress>
          <ExBody>
            <NavTree>
              <NavItem>
                <NavIcon $color="#4a90d0">
                  <Star size={6} fill="#4a90d0" />
                </NavIcon>
                クイック アクセス
              </NavItem>
              <NavItem $gap={4}>
                <NavIcon $color="#1668c0">
                  <Cloud size={7} fill="#1668c0" />
                </NavIcon>
                <Lat>OneDrive - alteryx.com</Lat>
              </NavItem>
              <NavItem $gap={4}>
                <NavIcon $color="#5a8ab8">
                  <Monitor size={6} />
                </NavIcon>
                <Lat>PC</Lat>
              </NavItem>
              <NavItem $indent>
                <NavIcon $color="#2a90c8">
                  <Square size={6} fill="#7ac0e0" />
                </NavIcon>
                <span>
                  <Lat>3D</Lat> オブジェクト
                </span>
              </NavItem>
              <NavItem $indent>
                <NavIcon $color="#2a70b8">
                  <Download size={6} />
                </NavIcon>
                ダウンロード
              </NavItem>
              <NavItem $indent>
                <NavIcon $color="#1a98d8">
                  <Monitor size={6} fill="#1a98d8" />
                </NavIcon>
                デスクトップ
              </NavItem>
              <NavItem $indent>
                <NavIcon $color="#8a9aa8">
                  <FileText size={6} />
                </NavIcon>
                ドキュメント
              </NavItem>
              <NavItem $indent>
                <NavIcon $color="#5a8ab8">
                  <Image size={6} />
                </NavIcon>
                ピクチャ
              </NavItem>
              <NavItem $indent>
                <NavIcon $color="#555">
                  <Video size={6} />
                </NavIcon>
                ビデオ
              </NavItem>
              <NavItem $indent>
                <NavIcon $color="#2a70b8">
                  <Music size={6} />
                </NavIcon>
                ミュージック
              </NavItem>
              <NavItem $indent $selected>
                <NavIcon $color="#3a8ab0">
                  <HardDrive size={6} />
                </NavIcon>
                <Lat>OS (C:)</Lat>
              </NavItem>
              <NavItem $indent>
                <NavIcon $color="#666">
                  <HardDrive size={6} />
                </NavIcon>
                <Lat>temp (¥¥jp-pr-005) (Z:)</Lat>
              </NavItem>
              <NavItem $gap={4}>
                <NavIcon $color="#2a80c8">
                  <Monitor size={6} />
                </NavIcon>
                ネットワーク
              </NavItem>
            </NavTree>
            <FilePane>
              <FileHead>
                <HeadCheck />
                <FileCol $w={123}>名前</FileCol>
                <FileCol $w={72}>更新日時</FileCol>
                <FileCol $w={12}>種類</FileCol>
              </FileHead>
              <FileRows>
                {files.map((f, i) => (
                  <FileRow key={f} $hover={i === 5}>
                    <RowCheck $on={i === 5} />
                    <ExcelBadge />
                    <FileCol $w={115}>{f}</FileCol>
                    <FileCol $w={72}>2022/07/20 13:42</FileCol>
                    <FileCol $w={11}>Micr</FileCol>
                  </FileRow>
                ))}
              </FileRows>
              <ExScroll>
                <ExThumb />
                <ScrollLeft size={5} />
                <ChevronRight size={5} />
              </ExScroll>
              <StatusGap />
            </FilePane>
            <ExStatus>
              7 個の項目
              <ViewButtons>
                <ViewButton $on>
                  <Square size={5} />
                </ViewButton>
                <ViewButton>
                  <Square size={5} />
                </ViewButton>
              </ViewButtons>
            </ExStatus>
          </ExBody>
        </ExplorerWindow>

        <Cursor width="22" height="36" viewBox="0 0 22 36">
          <path
            d="M1.5 1.5V26.5L7.5 21 12.5 33 17.5 31 12.5 19.5H20.5Z"
            fill="#fff"
            stroke="#333"
            strokeWidth="1.4"
            strokeLinejoin="round"
          />
        </Cursor>
      </Screen>
    </>
  );
}
